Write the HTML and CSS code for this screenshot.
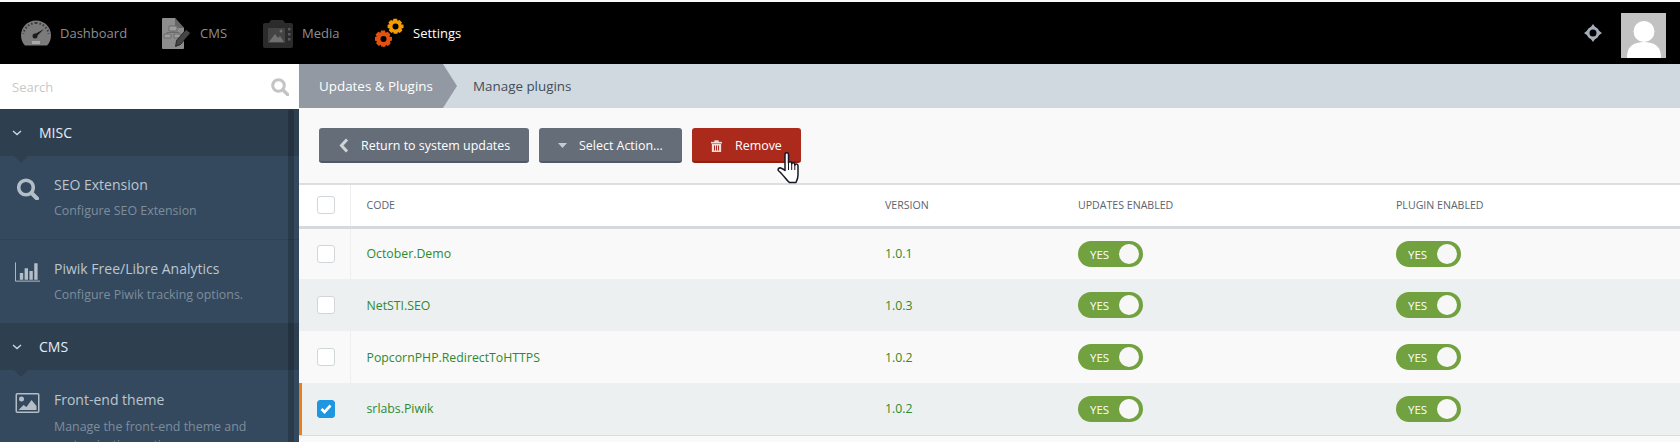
FILE: index.html
```html
<!DOCTYPE html>
<html lang="en">
<head>
<meta charset="utf-8">
<title>Manage plugins</title>
<link rel="stylesheet" href="styles.css">
</head>
<body>
<header class="topbar">
  <nav class="mainnav">
    <a class="navitem nav-dash">
      <svg class="navicon" width="30" height="26" viewBox="0 0 30 26"><path d="M4 25.500C1.500 23 0 19.500 0 15.500 0 7 6.700 .5 15 .5s15 6.500 15 15c0 4-1.500 7.500-4 10z" fill="#7b7b7b"/><path d="M15 3a13 13 0 0 0-12.700 11M15 3a13 13 0 0 1 12.700 11" fill="none" stroke="#3a3a3a" stroke-width="2" stroke-dasharray="1.500 2"/><path d="M13 14.500 23 9l-8 8z" fill="#1c1c1c"/><circle cx="14" cy="16" r="2.500" fill="#1c1c1c"/><rect x="11" y="21" width="8" height="3" fill="#a8a8a8"/></svg>
      <span>Dashboard</span>
    </a>
    <a class="navitem nav-cms">
      <svg class="navicon" width="30" height="31" viewBox="0 0 30 31"><path d="M1 1q0-1 1-1h12l9 10v20q0 1-1 1H2q-1 0-1-1z" fill="#8d8d8d"/><path d="M14 0v10h9z" fill="#666"/><path d="M8 8h8v5H8zM3 16h7v4H3zM13 16h7v4h-7zM12 13v3M6 16v-1.500h12V16" fill="#9d9d9d" stroke="#6a6a6a"/><path d="M15.500 22.500 25 11.500l4.500 3.500-10 11.500-5 2z" fill="#454545" stroke="#000" stroke-width=".6"/></svg>
      <span>CMS</span>
    </a>
    <a class="navitem nav-media">
      <svg class="navicon" width="30" height="29" viewBox="0 0 30 29"><path d="M2 4h4l2-3h12l2 3h6q2 0 2 2v21q0 2-2 2H2q-2 0-2-2V6q0-2 2-2z" fill="#2b2b2b"/><rect x="5" y="9" width="17" height="15" fill="#444"/><path d="m6 23 6-8 3 4 2-2 4 6z" fill="#707070"/><circle cx="18" cy="12" r="1.500" fill="#707070"/><path d="M25 9h2.500v2.500H25zM25 14h2.500v2.500H25zM25 19h2.500v2.500H25z" fill="#5a5a5a"/></svg>
      <span>Media</span>
    </a>
    <a class="navitem nav-settings active">
      <svg class="navicon" width="30" height="31" viewBox="0 0 30 31">
        <g transform="translate(8.500 21)" fill="#e2530f"><path d="M-2.400-9h4.800l.7 2.700 2.600-1.100 3.300 3.300-1.400 2.500L11-.9v4.300l-2.700.7 1.100 2.600-3.300 3.300-2.500-1.400-.7 2.400h-4.800l-.7-2.400-2.500 1.400-3.300-3.300 1.100-2.600-2.700-.7v-4.300l2.400-.7-1.400-2.500 3.300-3.300 2.600 1.100z" transform="translate(-.5 -1.200) scale(.82)"/><circle cx="0" cy="0" r="3" fill="#000"/></g>
        <g transform="translate(20.500 8.500)" fill="#f59c00"><path d="M-2.400-9h4.800l.7 2.700 2.600-1.100 3.300 3.300-1.400 2.500L11-.9v4.300l-2.700.7 1.100 2.600-3.300 3.300-2.500-1.400-.7 2.400h-4.800l-.7-2.400-2.500 1.400-3.300-3.300 1.100-2.600-2.700-.7v-4.300l2.400-.7-1.400-2.500 3.300-3.300 2.600 1.100z" transform="translate(-.3 -1) scale(.76)"/><circle cx="0" cy="0" r="3" fill="#000"/></g>
      </svg>
      <span>Settings</span>
    </a>
  </nav>
  <div class="topright">
    <svg class="target" width="18" height="18" viewBox="0 0 18 18"><circle cx="9" cy="9" r="5" fill="none" stroke="#a3adb7" stroke-width="3"/><path d="M9 0l2.500 3.500h-5zM9 18l2.500-3.500h-5zM0 9l3.500 2.500v-5zM18 9l-3.500 2.500v-5z" fill="#a3adb7"/></svg>
    <div class="avatar">
      <svg width="45" height="45" viewBox="0 0 45 45"><rect width="45" height="45" fill="#c2c2c2"/><ellipse cx="23" cy="18.500" rx="10.500" ry="10.500" fill="#fff"/><path d="M6 45c0-9 3-13 10-15q7-2 14 0c7 2 10 6 10 15z" fill="#fff"/></svg>
    </div>
  </div>
</header>

<div class="layout">
  <aside class="sidebar">
    <div class="searchbox">
      <span class="searchtext">Search</span>
      <svg width="18" height="18" viewBox="0 0 18 18"><circle cx="7.500" cy="7.500" r="5.800" fill="none" stroke="#c4c4c4" stroke-width="3"/><path d="m12 12 5 5" stroke="#c4c4c4" stroke-width="3.400" stroke-linecap="round"/></svg>
    </div>
    <div class="sidescroll">
      <div class="sidetrack"></div>
      <section class="group">
        <h3 class="grouphead"><svg class="caret" width="10" height="6" viewBox="0 0 10 6"><path d="m1 1 4 3.500L9 1" fill="none" stroke="#c9d4dc" stroke-width="1.500"/></svg>MISC</h3>
        <a class="sideitem">
          <svg class="sideicon" width="22" height="22" viewBox="0 0 22 22"><circle cx="9.500" cy="9.500" r="7.300" fill="none" stroke="#b4bec7" stroke-width="3.600"/><path d="m15 15 5.500 5.500" stroke="#b4bec7" stroke-width="4" stroke-linecap="round"/></svg>
          <div><div class="itemtitle">SEO Extension</div><div class="itemdesc">Configure SEO Extension</div></div>
        </a>
        <a class="sideitem">
          <svg class="sideicon" width="26" height="20" viewBox="0 0 26 20"><path d="M.5 0v19.500H26" fill="none" stroke="#b4bec7"/><path d="M5 11h3.500v7H5zM10 6h3.500v12H10zM15 9h3.500v9H15zM20 1h3.500v17H20z" fill="#b4bec7"/></svg>
          <div><div class="itemtitle">Piwik Free/Libre Analytics</div><div class="itemdesc">Configure Piwik tracking options.</div></div>
        </a>
      </section>
      <section class="group group-cms">
        <h3 class="grouphead"><svg class="caret" width="10" height="6" viewBox="0 0 10 6"><path d="m1 1 4 3.500L9 1" fill="none" stroke="#c9d4dc" stroke-width="1.500"/></svg>CMS</h3>
        <a class="sideitem">
          <svg class="sideicon" width="24" height="20" viewBox="0 0 24 20"><rect x=".75" y=".75" width="22.500" height="18.500" rx="1" fill="none" stroke="#b4bec7" stroke-width="1.500"/><circle cx="6" cy="6" r="2.500" fill="#b4bec7"/><path d="m3 17 5-5 3 2 5-7 5 6v4z" fill="#b4bec7"/></svg>
          <div><div class="itemtitle">Front-end theme</div><div class="itemdesc">Manage the front-end theme and customization options.</div></div>
        </a>
      </section>
    </div>
  </aside>

  <main class="content">
    <div class="crumbs">
      <span class="crumb-first">Updates &amp; Plugins</span>
      <span class="crumb-second">Manage plugins</span>
    </div>
    <div class="toolbar">
      <button class="btn btn-return">
        <svg class="btnicon" width="10" height="15" viewBox="0 0 10 15"><path d="M8 1.500 2.500 7.500l5.500 6" fill="none" stroke="#d0d4d9" stroke-width="3"/></svg>
        Return to system updates</button>
      <button class="btn btn-select">
        <svg class="btnicon" width="9" height="5" viewBox="0 0 9 5"><path d="M0 0h9L4.500 5z" fill="#c7cbd0"/></svg>
        Select Action...</button>
      <button class="btn btn-danger">
        <svg class="btnicon" width="11" height="12" viewBox="0 0 11 12"><path d="M0 2h11v1.300H0zM3.500 2V.5h4V2M1 4h9v8H1z" fill="#f1ddda" stroke="#f1ddda" stroke-width=".3"/><path d="M3.500 5.500v5M5.500 5.500v5M7.500 5.500v5" stroke="#ab2a1c"/></svg>
        Remove</button>
      <svg class="cursor" width="26" height="32" viewBox="0 0 26 32"><path d="M8 16.500V2.500c0-2.400 3.500-2.400 3.500 0V11c0-1.800 3.200-1.800 3.200 0v1c0-1.800 3.100-1.600 3.100.2v1c0-1.700 3.200-1.500 3.200.5v9.300c0 3-1 5.500-2 7.500H12.500C10 29 6 22.500 1.800 19c-1.600-1.500 0-3.600 2-3 1.500.5 3 1.500 4.200 2.500z" fill="#fff" stroke="#181824" stroke-width="1.500" stroke-linejoin="round"/><path d="M11.500 11v7M14.700 12v6M17.800 13v5" stroke="#181824"/></svg>
    </div>
    <table class="plugins">
      <thead>
        <tr><th class="c-check"><span class="check"></span></th><th class="c-code">Code</th><th class="c-ver">Version</th><th class="c-upd">Updates enabled</th><th>Plugin enabled</th></tr>
      </thead>
      <tbody>
        <tr><td class="c-check"><span class="check"></span></td><td>October.Demo</td><td>1.0.1</td><td><span class="toggle">YES<i></i></span></td><td><span class="toggle">YES<i></i></span></td></tr>
        <tr><td class="c-check"><span class="check"></span></td><td>NetSTI.SEO</td><td>1.0.3</td><td><span class="toggle">YES<i></i></span></td><td><span class="toggle">YES<i></i></span></td></tr>
        <tr><td class="c-check"><span class="check"></span></td><td>PopcornPHP.RedirectToHTTPS</td><td>1.0.2</td><td><span class="toggle">YES<i></i></span></td><td><span class="toggle">YES<i></i></span></td></tr>
        <tr class="selected"><td class="c-check"><span class="check checked"><svg width="12" height="10" viewBox="0 0 12 10"><path d="m1.500 5 3 3 6-6.500" fill="none" stroke="#fff" stroke-width="2.600"/></svg></span></td><td>srlabs.Piwik</td><td>1.0.2</td><td><span class="toggle">YES<i></i></span></td><td><span class="toggle">YES<i></i></span></td></tr>
      </tbody>
    </table>
  </main>
</div>
```
FILE: styles.css
```css
* { box-sizing: border-box; }
html, body { margin: 0; height: 442px; overflow: hidden; }
body { font-family: "Open Sans", sans-serif; background: #f9f9f9; padding-top: 2px; }
a { text-decoration: none; }

.topbar { height: 62px; background: #000; display: flex; justify-content: space-between; align-items: center; }
.mainnav { display: flex; align-items: center; padding-left: 21px; }
.navitem { display: flex; align-items: center; color: #8f8f8f; font-size: 13px; }
.navicon { margin-right: 9px; flex: none; }
.nav-dash { width: 140px; }
.nav-cms { width: 102px; }
.nav-media { width: 112px; }
.nav-settings .navicon { margin-right: 8px; }
.active { color: #fff; }

.topright { display: flex; align-items: center; padding-right: 14px; }
.target { margin-right: 19px; }
.avatar { width: 45px; height: 45px; line-height: 0; margin-top: 5px; }

.layout { display: flex; height: 378px; }
.sidebar { width: 299px; flex: none; background: #34495e; }
.searchbox { height: 45px; background: #fff; display: flex; align-items: center; justify-content: space-between; padding: 0 10px 0 12px; }
.searchtext { color: #c8c8c8; font-size: 13px; }
.sidescroll { position: relative; height: 333px; overflow: hidden; }
.sidetrack { position: absolute; z-index: 1; left: 288px; top: 0; width: 6px; height: 100%; background: rgba(0,0,0,.2); border-radius: 4px 4px 0 0; }
.grouphead { position: relative; margin: 0; height: 47px; background: #2e3f50; color: #e6eef5; font-size: 14px; font-weight: 400; display: flex; align-items: center; padding-left: 12px; }
.grouphead::after { content: ""; position: absolute; left: 14px; top: 47px; border: 7px solid transparent; border-top-color: #2e3f50; border-bottom: 0; }
.caret { margin-right: 17px; }
.sideitem { display: flex; height: 83.500px; padding: 17px 0 0 15px; border-bottom: 1px solid #2f4255; color: #c3ccd4; }
.sideitem:last-child { border-bottom: 0; }
.group-cms .sideitem { padding-top: 18px; }
.group-cms .itemdesc { margin-top: 6px; }
.sideicon { flex: none; width: 25px; margin: 5px 14px 0 0; }
.itemtitle { font-size: 14px; line-height: 24px; color: #bcc6cf; }
.itemdesc { font-size: 12.400px; line-height: 18px; margin-top: 5px; color: #7e8d9c; width: 225px; }

.content { flex: 1; min-width: 0; display: flex; flex-direction: column; }
.crumbs { height: 44px; background: #d0d9df; display: flex; align-items: center; font-size: 13.400px; color: #3f4e5c; }
.crumb-first { height: 44px; width: 158px; line-height: 44px; padding-left: 20px; background: #9299a3; color: #fff; clip-path: polygon(0 0, 144px 0, 158px 22px, 144px 44px, 0 44px); }
.crumb-second { margin-left: 16px; }

.toolbar { position: relative; height: 77px; display: flex; align-items: flex-start; gap: 10px; padding: 20px 0 0 20px; border-bottom: 2px solid #dcdfe1; }
.btn { height: 35px; border: 0; border-bottom: 2px solid #525964; border-radius: 3px; background: #656d79; color: #fff; font: 12.450px "Open Sans", sans-serif; display: flex; align-items: center; padding: 2px 0 0; }
.btn-return { width: 210px; padding-left: 20px; }
.btn-select { width: 143px; padding-left: 19px; }
.btn-danger { width: 109px; padding-left: 19px; background: #ab2a1c; border-bottom-color: #91200f; }
.btnicon { margin-right: 12px; flex: none; }
.btn-danger .btnicon { margin-right: 13px; }
.cursor { position: absolute; left: 478px; top: 44px; }

.plugins { width: 100%; border-collapse: collapse; table-layout: fixed; background: #fff; }
.plugins th { height: 42px; font-size: 10.600px; font-weight: 400; text-transform: uppercase; text-align: left; color: #5b6470; border-bottom: 3px solid #d5d9dc; padding: 0 0 0 16px; }
.plugins td { height: 52px; font-size: 12.300px; color: #2f8a2c; padding: 0 0 0 16px; background: #f9f9f9; }
.plugins tbody tr:nth-child(even) td { background: #ecf0f1; }
.plugins tbody tr:last-child td { border-bottom: 1px solid #d8dcdf; }
.c-check { width: 51px; border-right: 1px solid #efefef; padding: 0 0 0 18px !important; }
.plugins tr:nth-child(even) .c-check { border-right-color: #ecf0f1; }
.c-code { width: 519px; }
.c-ver { width: 193px; }
.c-upd { width: 318px; }
.check { display: block; width: 18px; height: 18px; border: 1px solid #d1d6d9; border-radius: 3px; background: #fff; }
.checked { background: #1f97e0; border-color: #1f97e0; display: flex; align-items: center; justify-content: center; }
.selected .c-check { box-shadow: inset 3px 0 0 #e67e22; }
.toggle { position: relative; display: block; width: 65px; height: 26px; border-radius: 13px; background: #72a13f; color: #fff; font-size: 11.500px; line-height: 27px; padding-left: 12px; }
.toggle i { position: absolute; right: 4px; top: 3px; width: 20px; height: 20px; border-radius: 50%; background: #f7f7f7; }
```
